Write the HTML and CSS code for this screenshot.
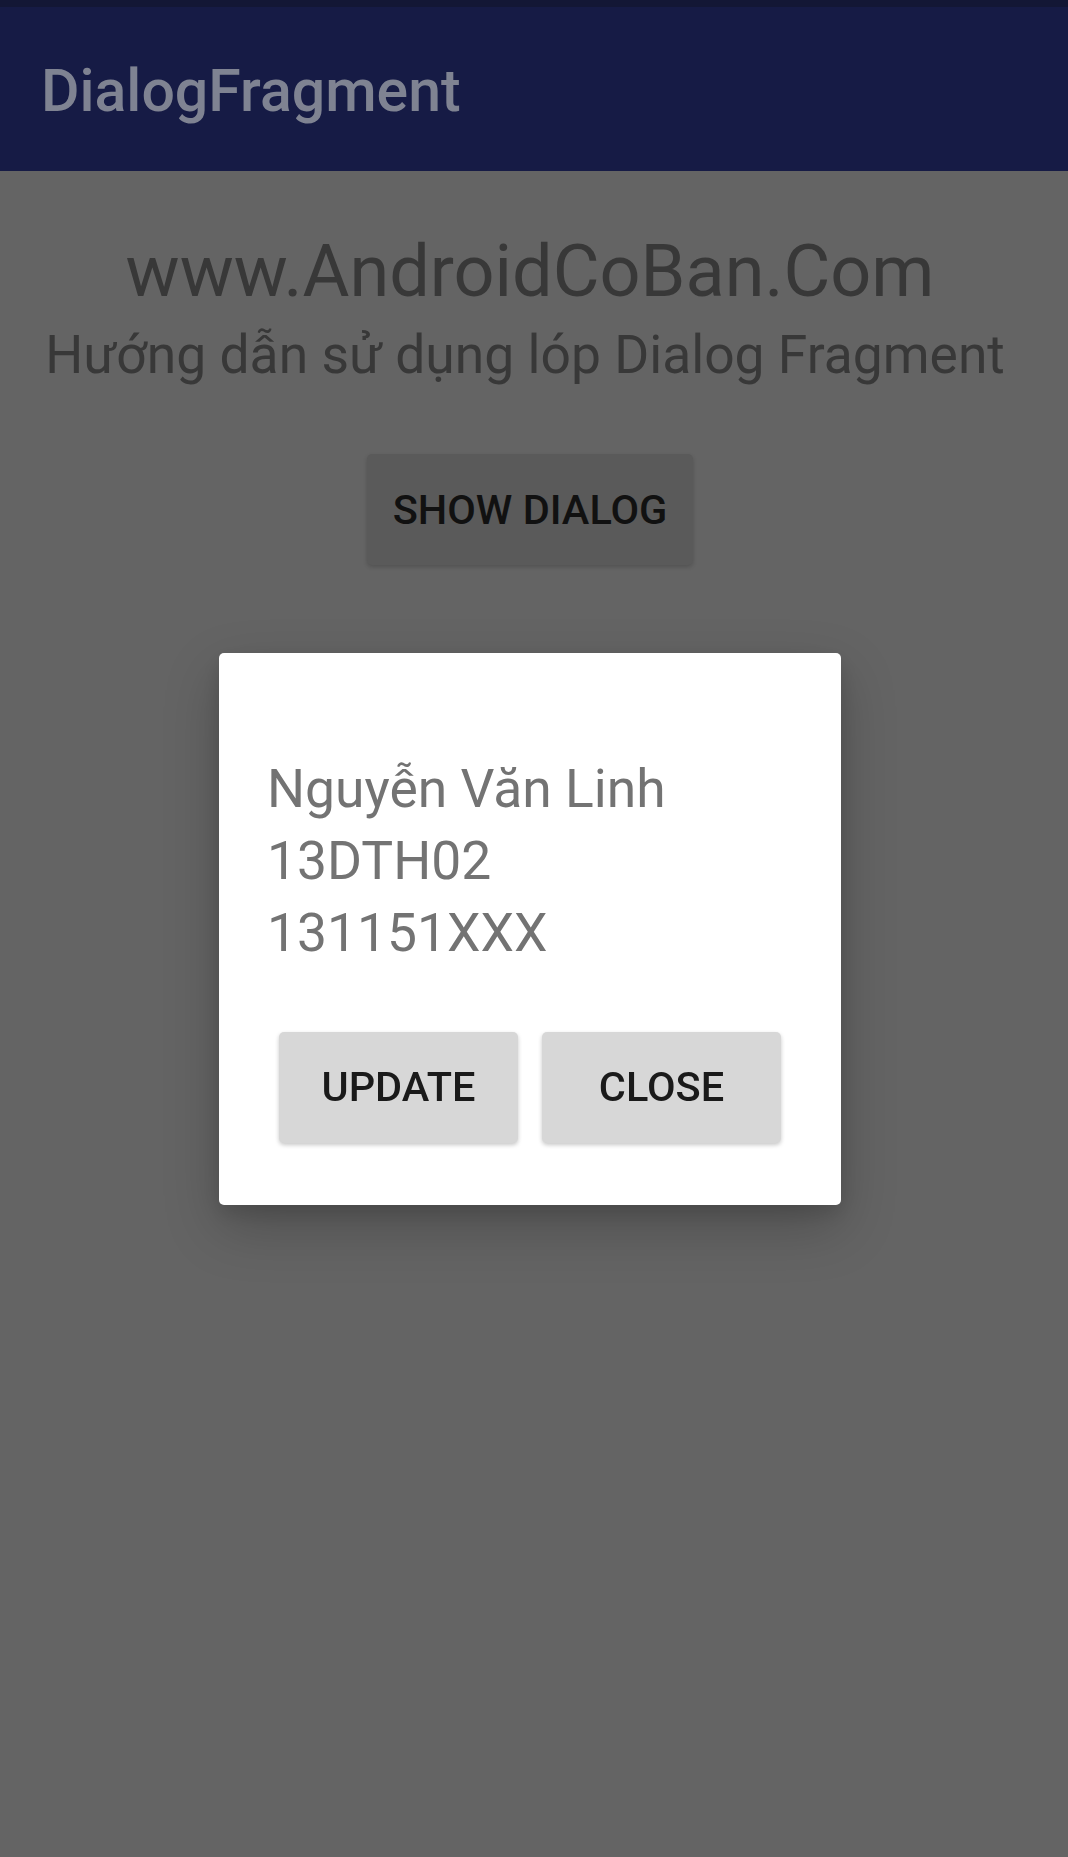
FILE: index.html
```html
<!DOCTYPE html>
<html lang="vi">
<head>
<meta charset="utf-8">
<title>DialogFragment</title>
<link rel="stylesheet" href="styles.css">
</head>
<body>
<div class="screen">
  <header class="toolbar">
    <h1 class="toolbar-title">DialogFragment</h1>
  </header>
  <main class="content">
    <p class="site">www.AndroidCoBan.Com</p>
    <p class="subtitle">Hướng dẫn sử dụng lóp Dialog Fragment</p>
    <button class="btn btn-show" type="button">SHOW DIALOG</button>
  </main>
</div>
<div class="overlay">
  <div class="dialog">
    <div class="dialog-text">
      <p class="line">Nguyễn Văn Linh</p>
      <p class="line">13DTH02</p>
      <p class="line">131151XXX</p>
    </div>
    <div class="dialog-actions">
      <button class="btn btn-dialog" type="button">UPDATE</button>
      <button class="btn btn-dialog" type="button">CLOSE</button>
    </div>
  </div>
</div>
</body>
</html>
```
FILE: styles.css
```css
html, body {
  margin: 0;
  padding: 0;
  height: 100%;
}

body {
  background: #646464;
  font-family: Roboto, "Noto Sans", "Liberation Sans", sans-serif;
  overflow: hidden;
}

.screen {
  display: flex;
  flex-direction: column;
  min-height: 100vh;
}

.toolbar {
  box-sizing: border-box;
  height: 171px;
  background: #161b45;
  border-top: 7px solid #131735;
  padding: 54px 0 0 41px;
}

.toolbar-title {
  margin: 0;
  font-size: 59px;
  font-weight: 500;
  line-height: 1;
  color: #7f8392;
}

.content {
  display: flex;
  flex-direction: column;
  align-items: center;
  padding: 59px 8px 0 0;
}

.site {
  margin: 0;
  font-size: 72px;
  line-height: 83px;
  color: #383838;
}

.subtitle {
  margin: 10px 0 0;
  padding-right: 10px;
  font-size: 53.4px;
  line-height: 63px;
  color: #383838;
}

.btn {
  font-family: Roboto, "Noto Sans", "Liberation Sans", sans-serif;
  font-weight: 500;
  font-size: 41.5px;
  border: none;
  border-radius: 5px;
  padding: 0;
  line-height: 1;
  cursor: pointer;
}

.btn-show {
  margin-top: 68px;
  width: 326px;
  height: 111px;
  background: #5a5a5a;
  color: #111111;
  box-shadow: 0 2px 4px rgba(0, 0, 0, 0.18);
}

.overlay {
  position: fixed;
  inset: 0;
  display: flex;
  align-items: center;
  justify-content: center;
  padding-right: 8px;
}

.dialog {
  box-sizing: border-box;
  width: 622px;
  height: 552px;
  background: #ffffff;
  border-radius: 5px;
  padding: 100px 50px 62px 48px;
  display: flex;
  flex-direction: column;
  box-shadow: 0 22px 55px rgba(0, 0, 0, 0.22), 0 8px 20px rgba(0, 0, 0, 0.12);
}

.dialog-text {
  display: flex;
  flex-direction: column;
}

.line {
  margin: 0;
  font-size: 53.4px;
  line-height: 72px;
  color: #737373;
}

.dialog-actions {
  margin-top: 63px;
  display: flex;
  justify-content: center;
  gap: 24px;
  padding-left: 2px;
}

.btn-dialog {
  width: 239px;
  height: 111px;
  background: #d7d7d7;
  color: #1a1a1a;
  box-shadow: 0 2px 4px rgba(0, 0, 0, 0.22);
}
```
